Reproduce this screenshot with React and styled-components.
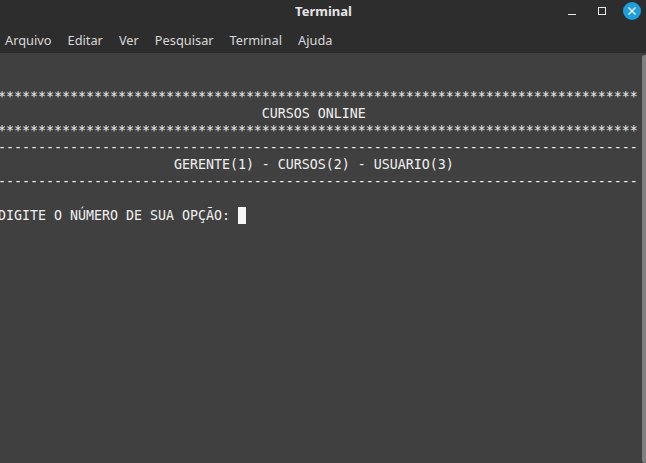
import React from "react";
import styled, { createGlobalStyle } from "styled-components";

const GlobalStyle = createGlobalStyle`
  html, body {
    margin: 0;
    padding: 0;
    height: 100%;
    background: #404040;
  }
  #root {
    height: 100%;
  }
`;

const Window = styled.div`
  display: flex;
  flex-direction: column;
  width: 646px;
  height: 463px;
  overflow: hidden;
  background: #404040;
`;

const TitleBar = styled.header`
  position: relative;
  display: flex;
  align-items: center;
  justify-content: center;
  height: 21px;
  padding-bottom: 2px;
  background: #2d2d2d;
`;

const Title = styled.h1`
  margin: 0 0 0 1px;
  font: 700 13px "Noto Sans", sans-serif;
  color: #e6e6e6;
`;

const Controls = styled.div`
  position: absolute;
  top: 2px;
  right: 5px;
  display: flex;
  align-items: center;
`;

const ControlButton = styled.button`
  display: flex;
  align-items: center;
  justify-content: center;
  width: ${(p) => p.$width}px;
  height: 18px;
  padding: 0;
  border: 0;
  background: none;
`;

const MenuBar = styled.nav`
  display: flex;
  align-items: center;
  gap: 16px;
  height: 27px;
  padding: 3px 0 0 5px;
  background: #2d2d2d;
`;

const MenuItem = styled.span`
  font: 400 12.8px "Noto Sans", sans-serif;
  color: #d8d8d8;
`;

const TerminalBody = styled.main`
  flex: 1;
  display: flex;
  min-height: 0;
`;

const Screen = styled.pre`
  flex: 1;
  margin: 35px 0 0 -2px;
  overflow: hidden;
  font: 400 13.29px/17px "DejaVu Sans Mono", monospace;
  color: #f0f0f0;
`;

const Cursor = styled.span`
  display: inline-block;
  width: 8px;
  height: 17px;
  vertical-align: top;
  background: #f5f5f5;
`;

const ScrollThumb = styled.div`
  flex: none;
  width: 4px;
  margin-top: 2px;
  border-radius: 3px 0 0 3px;
  background: #808080;
`;

const MENU_ITEMS = ["Arquivo", "Editar", "Ver", "Pesquisar", "Terminal", "Ajuda"];

const STARS = "*".repeat(80);
const DASHES = "-".repeat(80);

const LINES = [
  STARS,
  " ".repeat(33) + "CURSOS ONLINE",
  STARS,
  DASHES,
  " ".repeat(22) + "GERENTE(1) - CURSOS(2) - USUARIO(3)",
  DASHES,
  "",
];

function App() {
  return (
    <Window>
      <GlobalStyle />
      <TitleBar>
        <Title>Terminal</Title>
        <Controls>
          <ControlButton $width={18} aria-label="Minimizar">
            <svg width="10" height="10" viewBox="0 0 10 10">
              <path d="M1 8.5h8" stroke="#e8e8e8" strokeWidth="1" />
            </svg>
          </ControlButton>
          <ControlButton $width={42} aria-label="Maximizar">
            <svg width="10" height="10" viewBox="0 0 10 10">
              <rect x="1.5" y="1.5" width="7" height="7" fill="none" stroke="#e8e8e8" />
            </svg>
          </ControlButton>
          <ControlButton $width={18} aria-label="Fechar">
            <svg width="18" height="18" viewBox="0 0 18 18">
              <circle cx="9" cy="9" r="9" fill="#1f9ede" />
              <path d="M5.5 5.5l7 7M12.5 5.5l-7 7" stroke="#fff" strokeWidth="1.3" />
            </svg>
          </ControlButton>
        </Controls>
      </TitleBar>
      <MenuBar>
        {MENU_ITEMS.map((item) => (
          <MenuItem key={item}>{item}</MenuItem>
        ))}
      </MenuBar>
      <TerminalBody>
        <Screen>
          {LINES.join("\n")}
          {"\nDIGITE O NÚMERO DE SUA OPÇÃO: "}
          <Cursor />
        </Screen>
        <ScrollThumb />
      </TerminalBody>
    </Window>
  );
}

export default App;
